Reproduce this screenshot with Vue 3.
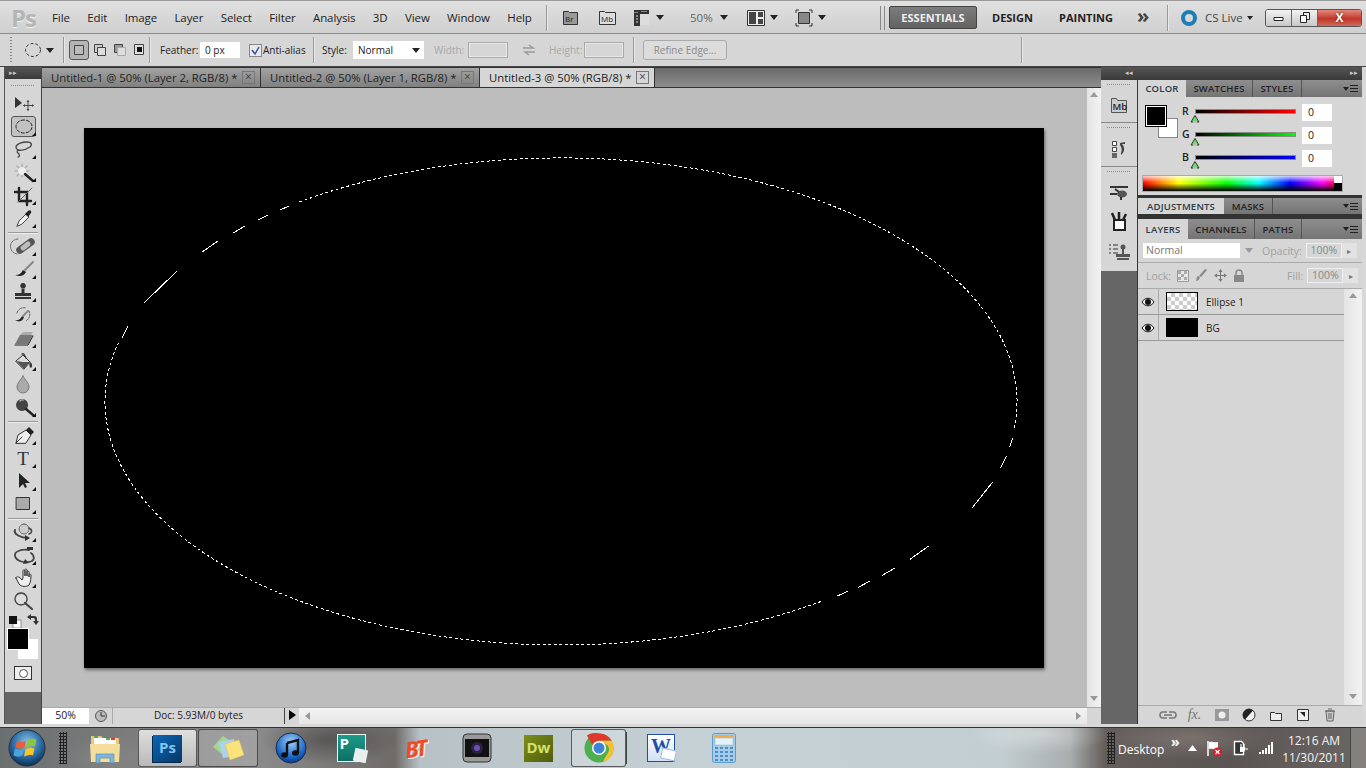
<template>
  <div class="app">
    <!-- title + menu bar -->
    <header class="menubar">
      <div class="ps-logo">Ps</div>
      <nav class="menu">
        <span v-for="m in menus" :key="m">{{ m }}</span>
      </nav>
      <i class="vsep"></i>
      <div class="app-btn">
        <svg width="17" height="17" viewBox="0 0 17 17"><path d="M1.5 2.500h5l1 1h8v12h-14z" fill="#999" stroke="#333" /><text x="3" y="12.500" class="ico-text">Br</text></svg>
      </div>
      <div class="app-btn">
        <svg width="19" height="17" viewBox="0 0 19 17"><path d="M1.500 2.500h5l1 1h10v12h-16z" fill="#ddd" stroke="#333" /><text x="3" y="12.500" class="ico-text">Mb</text></svg>
      </div>
      <div class="app-btn">
        <svg width="18" height="18" viewBox="0 0 18 18"><path d="M1 2h15v14h-15z" fill="#ddd" /><path d="M1 1h6v16h-6zM7 1h9v4h-9z" fill="#333" /><path d="M2 3v1M4 3v1M9 2v1M11 2v1M13 2v1M3 7h2M3 10h2M3 13h2" stroke="#ddd" /></svg>
      </div>
      <i class="arrow"></i>
      <div class="zoom-val">50%</div>
      <i class="arrow"></i>
      <div class="app-btn">
        <svg width="18" height="18" viewBox="0 0 18 18"><path d="M.5 1.500h17v15h-17z" fill="#eee" stroke="#333" /><path d="M2 3h7v12h-7zM11 3h5v5h-5zM11 10h5v5h-5z" fill="#444" /></svg>
      </div>
      <i class="arrow"></i>
      <div class="app-btn">
        <svg width="18" height="18" viewBox="0 0 18 18"><path d="M1 4v-3h3M14 1h3v3M17 14v3h-3M4 17h-3v-3" fill="none" stroke="#333" /><path d="M3.500 3.500h11v11h-11z" fill="#888" stroke="#333" /></svg>
      </div>
      <i class="arrow"></i>
      <i class="dblsep"></i>
      <div class="workspace active">ESSENTIALS</div>
      <div class="workspace pad">DESIGN</div>
      <div class="workspace">PAINTING</div>
      <div class="more">»</div>
      <i class="vsep"></i>
      <div class="cs-ring"></div>
      <div class="cs-live">CS Live <i class="arrow small"></i></div>
      <div class="win-btns">
        <div class="win-btn"><svg width="12" height="8"><path d="M1 3.500h9v3h-9z" fill="#fff" stroke="#222" /></svg></div>
        <div class="win-btn"><svg width="12" height="13"><path d="M4.500 1.500h6v7h-6z" fill="#eee" stroke="#222" /><path d="M1.500 4.500h6v7h-6z" fill="#fff" stroke="#222" /></svg></div>
        <div class="win-btn close">X</div>
      </div>
    </header>

    <!-- tool options bar -->
    <div class="options">
      <div class="grip-v"></div>
      <svg width="20" height="20" viewBox="0 0 20 20"><ellipse cx="10" cy="10" rx="7.500" ry="6.500" fill="none" stroke="#333" stroke-dasharray="3 2" /></svg>
      <i class="arrow"></i>
      <i class="vsep"></i>
      <div class="modes">
        <div class="mode active"><svg width="12" height="12"><path d="M1.500 1.500h9v9h-9z" fill="#bbb" stroke="#444" /></svg></div>
        <div class="mode"><svg width="14" height="14"><path d="M1.500 1.500h8v8h-8z" fill="#ccc" stroke="#444" /><path d="M4.500 4.500h8v8h-8z" fill="#ddd" stroke="#444" /></svg></div>
        <div class="mode"><svg width="14" height="14"><path d="M1.500 1.500h8v3h-5v5h-3z" fill="#999" stroke="#444" /><path d="M4.500 4.500h8v8h-8z" fill="#ddd" stroke="#aaa" /></svg></div>
        <div class="mode"><svg width="14" height="14"><path d="M1.500 1.500h9v10h-9z" fill="#ddd" stroke="#444" /><path d="M4 4h5v5h-5z" fill="#111" /></svg></div>
      </div>
      <i class="vsep"></i>
      <label class="opt-label">Feather:</label>
      <div class="field feather">0 px</div>
      <span></span>
      <div class="checkbox"><svg width="11" height="11"><path d="M2 5l3 4 4-7" fill="none" stroke="#35518f" stroke-width="1.500" /></svg></div>
      <label class="opt-label">Anti-alias</label>
      <i class="vsep"></i>
      <label class="opt-label">Style:</label>
      <div class="field style-select">Normal <i class="arrow"></i></div>
      <span></span>
      <label class="opt-label off">Width:</label>
      <div class="field off-field"></div>
      <svg class="swap" width="14" height="12"><path d="M1 4h9M7 1l4 3-4 0M13 8h-9M7 11l-4-3 4 0" fill="none" stroke="#999" stroke-width="1.500" /></svg>
      <label class="opt-label off">Height:</label>
      <div class="field off-field"></div>
      <span></span>
      <i class="vsep"></i>
      <div class="refine">Refine Edge...</div>
      <span></span>
      <i class="vsep"></i>
    </div>

    <div class="work">
      <!-- tools -->
      <aside class="tools">
        <div class="collapse-bar">▸▸</div>
        <div class="grip-h"></div>
        <template v-for="(t, i) in tools" :key="i">
          <div v-if="t.sep" class="tool-sep"></div>
          <div v-else class="tool" :class="{ selected: t.selected }">
            <svg width="36" height="23" viewBox="0 0 36 23">
              <path v-for="(s, k) in t.shapes" :key="k" :d="s.d" :fill="s.f" :stroke="s.s" :stroke-width="s.w" :stroke-dasharray="s.dash" stroke-linecap="round" />
              <text v-if="t.label" x="18" y="18" text-anchor="middle" class="tool-t">{{ t.label }}</text>
              <path v-if="t.fly" d="M31 17v4h-4z" fill="#111" />
            </svg>
          </div>
        </template>
        <div class="mini-swatch">
          <svg width="36" height="16" viewBox="0 0 36 16">
            <path d="M8 8h8v8h-8z" fill="#fff" stroke="#333" stroke-width=".5" />
            <path d="M4 4h8v8h-8z" fill="#111" />
            <path d="M22 5l4-3v2h3a3 3 0 0 1 3 3v2h2l-3 4-3-4h2v-1a2 2 0 0 0-2-2h-2v2z" fill="#333" />
          </svg>
        </div>
        <div class="swatches">
          <div class="sw-bg"></div>
          <div class="sw-fg"></div>
        </div>
        <div class="qmask"><div class="qmask-dot"></div></div>
        <div class="tools-fill"></div>
      </aside>

      <!-- document -->
      <main class="doc">
        <div class="tabs">
          <div v-for="t in docTabs" :key="t.name" class="tab" :class="{ active: t.active }" >
            <span>{{ t.name }}</span>
            <b class="tab-x">×</b>
          </div>
        </div>
        <div class="doc-row">
          <div class="pasteboard">
            <div class="canvas">
              <svg class="ants" width="960" height="540" viewBox="84 128 960 540">
                <path :d="dottedPath" fill="none" stroke="#fff" stroke-dasharray="3 2.500" shape-rendering="crispEdges" />
                <path :d="dashPath" fill="none" stroke="#fff" shape-rendering="crispEdges" />
              </svg>
            </div>
          </div>
          <div class="vscroll">
            <i class="up"></i>
            <i class="down"></i>
          </div>
        </div>
        <div class="status">
          <div class="st-zoom">50%</div>
          <div class="st-icon"><svg width="14" height="14"><circle cx="7" cy="7" r="5.500" fill="#bbb" stroke="#555" /><path d="M7 3v4h4" fill="none" stroke="#333" /></svg></div>
          <div class="st-doc">Doc: 5.93M/0 bytes</div>
          <div class="st-arrow"></div>
          <div class="hscroll"><i class="left"></i><i class="right"></i></div>
          <div class="st-corner"></div>
        </div>
      </main>

      <!-- panels -->
      <aside class="side">
        <div class="side-bar"><span>◂◂</span><span>▸▸</span></div>
        <div class="side-body">
          <div class="dock">
            <div class="dock-group g1">
              <div class="grip-h"></div>
              <svg width="20" height="20" viewBox="0 0 20 20"><path d="M2.500 3.500h5l1 2h9v12h-15z" fill="#ccc" stroke="#555" /><text x="3.500" y="15" class="ico-text big">Mb</text></svg>
            </div>
            <div class="dock-group g2">
              <div class="grip-h"></div>
              <svg width="20" height="20" viewBox="0 0 20 20"><path d="M3.500 3.500h4v4h-4zM3.500 9.500h4v4h-4z" fill="#fff" stroke="#444" /><path d="M3 15h5v5h-5z" fill="#666" /><path d="M11 5l5-1v2l-3 0c3 3 3 8-1 11l0-2c1-3 1-5-1-8z" fill="#444" /></svg>
            </div>
            <div class="dock-group g3">
              <div class="grip-h"></div>
              <svg width="20" height="20" viewBox="0 0 20 20"><path d="M1 5h18M1 12h7" stroke="#333" stroke-width="2" /><ellipse cx="13" cy="12" rx="5" ry="3.500" fill="#555" /><path d="M6 7l4 3M12 15v3" stroke="#333" stroke-width="2" /></svg>
              <svg width="20" height="22" viewBox="0 0 20 22"><path d="M5 9h11v10h-11z" fill="#fff" stroke="#222" stroke-width="2" /><path d="M6 9l-3-7M10 9v-8M14 9l3-6" stroke="#222" stroke-width="2.500" /></svg>
              <svg width="22" height="20" viewBox="0 0 22 20"><path d="M1 3h2M5 3h5M1 7h2M5 7h5M1 11h2M5 11h5" stroke="#333" /><circle cx="15" cy="5" r="2.500" fill="#555" /><path d="M14 6h2v6h-2zM8 12h14v3h-14zM9 16h12v2h-12z" fill="#555" /></svg>
            </div>
          </div>

          <div class="panels">
            <section class="tabrow color-tabs">
              <div class="ptab active w48">COLOR</div>
              <div class="ptab w67">SWATCHES</div>
              <div class="ptab w49">STYLES</div>
              <div class="pmenu"><i class="arrow small"></i><span class="bars"></span></div>
            </section>
            <section class="color-body">
              <div class="color-chips">
                <div class="chip-bg"></div>
                <div class="chip-fg"></div>
              </div>
              <div class="sliders">
                <div v-for="c in channels" :key="c.key" class="slider-row">
                  <label>{{ c.key }}</label>
                  <div class="track-wrap">
                    <div class="track" :class="c.cls"></div>
                    <svg class="thumb" width="10" height="8"><path d="M5 .5l4 6.500h-8z" fill="#6fdc6f" stroke="#333" /><path d="M3 7h4" stroke="#fff" /></svg>
                  </div>
                  <div class="num">0</div>
                </div>
              </div>
              <div class="spectrum">
                <div class="spec-end"></div>
              </div>
            </section>

            <section class="tabrow adj-tabs">
              <div class="ptab active w86">ADJUSTMENTS</div>
              <div class="ptab w49">MASKS</div>
              <div class="pmenu"><i class="arrow small"></i><span class="bars"></span></div>
            </section>

            <section class="tabrow layer-tabs">
              <div class="ptab active w50">LAYERS</div>
              <div class="ptab w67">CHANNELS</div>
              <div class="ptab w47">PATHS</div>
              <div class="pmenu"><i class="arrow small"></i><span class="bars"></span></div>
            </section>
            <section class="layers-body">
              <div class="blend-row">
                <div class="blend">Normal</div>
                <div class="blend-arrow"><i class="arrow grey"></i></div>
                <label class="dim">Opacity:</label>
                <div class="pct">100%</div>
                <div class="pct-arrow">▸</div>
              </div>
              <div class="lock-row">
                <label class="dim">Lock:</label>
                <svg width="12" height="12"><path d="M.5.5h11v11h-11z" fill="#e8e8e8" stroke="#999" /><path d="M1 1h3v3h-3zM7 1h3v3h-3zM4 4h3v3h-3zM1 7h3v3h-3zM7 7h3v3h-3z" fill="#aaa" /></svg>
                <svg width="13" height="13"><path d="M12 1l-6 7-2-1 6-7zM5 8c-1 3-2 4-4 4 1-1 0-4 2-5z" fill="#888" /></svg>
                <svg width="13" height="13"><path d="M6.500 0l2 3h-4zM6.500 13l2-3h-4zM0 6.500l3-2v4zM13 6.500l-3-2v4zM6 3h1v7h-1zM3 6h7v1h-7z" fill="#777" /></svg>
                <svg width="12" height="13"><path d="M3 6v-2a3 3 0 0 1 6 0v2" fill="none" stroke="#888" stroke-width="1.500" /><path d="M1 6h10v7h-10z" fill="#888" /></svg>
                <label class="dim fill-label">Fill:</label>
                <div class="pct">100%</div>
                <div class="pct-arrow">▸</div>
              </div>
              <div class="layer-area">
                <div class="layer-list">
                  <div v-for="l in layers" :key="l.name" class="layer">
                    <div class="eye">
                      <svg width="14" height="10" viewBox="0 0 14 10"><path d="M1 5c3-5 9-5 12 0-3 5-9 5-12 0z" fill="#eee" stroke="#111" /><circle cx="7" cy="5" r="3" fill="#111" /></svg>
                    </div>
                    <div class="thumb-box" :class="l.thumb"></div>
                    <span class="layer-name">{{ l.name }}</span>
                  </div>
                </div>
                <div class="layer-scroll"><i class="up"></i><i class="down"></i></div>
              </div>
              <div class="layer-foot">
                <svg width="18" height="10"><path d="M8 2h-4a3 3 0 0 0 0 6h4M10 2h4a3 3 0 0 1 0 6h-4M5 5h8" fill="none" stroke="#777" stroke-width="1.500" /></svg>
                <span class="fx">fx.</span>
                <svg width="14" height="12"><path d="M0 0h14v12h-14z" fill="#999" /><circle cx="7" cy="6" r="3.500" fill="#eee" /></svg>
                <svg width="14" height="14"><circle cx="7" cy="7" r="6" fill="#eee" stroke="#333" /><path d="M7 1a6 6 0 0 0-4 10.500l8-9a6 6 0 0 0-4-1.500z" fill="#222" /></svg>
                <svg width="12" height="11"><path d="M.5 2.500v8h11v-7h-6l-1-1z" fill="#eee" stroke="#333" /></svg>
                <svg width="12" height="12"><path d="M.5.5h11v11h-11z" fill="#eee" stroke="#333" /><path d="M3 3h5v5z" fill="#222" /></svg>
                <svg width="12" height="14"><path d="M2 3l1 10h6l1-10z" fill="#ccc" stroke="#666" /><path d="M1 3h10M4 1h4M5 5v6M7 5v6" stroke="#666" /></svg>
              </div>
            </section>
          </div>
        </div>
      </aside>
    </div>

    <!-- windows taskbar -->
    <footer class="taskbar">
      <div class="cell">
        <svg width="40" height="40" viewBox="0 0 40 40">
          <defs>
            <radialGradient id="orb" cx="50%" cy="35%" r="65%"><stop offset="0" stop-color="#8cc4e8" /><stop offset=".6" stop-color="#2a6da5" /><stop offset="1" stop-color="#0c2f52" /></radialGradient>
          </defs>
          <circle cx="20" cy="20" r="18" fill="url(#orb)" stroke="#27323c" />
          <path d="M10 13c3 2 6 1 9-.5l-1.500 7c-3 1.500-6 1.500-9 0z" fill="#e8603a" />
          <path d="M20.500 12c3-1 6-2 9-.5l-1.500 7c-3-1-6 0-9 1z" fill="#8cc63f" />
          <path d="M8 20.500c3 1.500 6 1.500 9 0l-1.500 7c-3 1.500-6 1.500-9 0z" fill="#4aa3df" />
          <path d="M18.500 21c3-1 6-2 9-.5l-1.500 7c-3-1-6 0-9 1z" fill="#f5c52c" />
        </svg>
      </div>
      <div class="cell"><div class="task-grip"></div></div>
      <div class="cell">
        <svg width="32" height="30" viewBox="0 0 32 30"><path d="M2 3h10l2 2h16v24h-28z" fill="#e8c878" /><path d="M5 5h22v6h-22z" fill="#fff" /><path d="M5 3h4v2h-4zM17 5h4v2h-4z" fill="#4caf50" /><path d="M22 5h4v2h-4z" fill="#d33" /><path d="M1 11h30l-1 18h-28z" fill="#f4dc9a" /><path d="M7 21h18v9h-4v-5h-10v5h-4z" fill="#7fb6dc" stroke="#4d87b0" stroke-width=".6" /></svg>
      </div>
      <div class="cell task-btn active">
        <div class="ps-app">Ps</div>
      </div>
      <span></span>
      <div class="cell task-btn dim-btn">
        <svg width="34" height="28" viewBox="0 0 34 28"><path d="M2 13l10-11 12 8-9 13z" fill="#a4d88f" /><path d="M8 8l15-3 3 17-14 2z" fill="#a9d3ee" /><path d="M14 10l14-4 5 15-14 5z" fill="#fbe27a" stroke="#e0c050" stroke-width=".5" /></svg>
      </div>
      <div class="cell">
        <svg width="32" height="32" viewBox="0 0 32 32">
          <defs><radialGradient id="tunes" cx="50%" cy="30%" r="75%"><stop offset="0" stop-color="#9fd0f5" /><stop offset=".7" stop-color="#1561c6" /><stop offset="1" stop-color="#0b2d70" /></radialGradient></defs>
          <circle cx="16" cy="16" r="15" fill="url(#tunes)" stroke="#1a2a4a" />
          <path d="M12 11l11-3v13" fill="none" stroke="#111" stroke-width="2.400" /><path d="M12 11v12" stroke="#111" stroke-width="2.400" /><ellipse cx="9.500" cy="23" rx="3.500" ry="2.800" fill="#111" /><ellipse cx="20.500" cy="21" rx="3.500" ry="2.800" fill="#111" />
        </svg>
      </div>
      <div class="cell">
        <div class="project">P<i class="project-doc"></i></div>
      </div>
      <div class="cell"><div class="bt">BT</div></div>
      <div class="cell">
        <svg width="30" height="30" viewBox="0 0 30 30"><rect x="1" y="1" width="28" height="28" rx="4" fill="#9a9a9a" stroke="#333" /><rect x="3" y="6" width="24" height="18" fill="#111" /><circle cx="15" cy="15" r="6" fill="#2b2140" /><circle cx="15" cy="15" r="3" fill="#6c4fb0" /></svg>
      </div>
      <span></span>
      <div class="cell"><div class="dw-app">Dw</div></div>
      <div class="cell task-btn chrome-btn">
        <svg width="30" height="30" viewBox="0 0 30 30">
          <circle cx="15" cy="15" r="14.500" fill="#4caf50" />
          <path d="M15 .5a14.500 14.500 0 0 1 12.600 7.300l-12.600 0a7 7 0 0 0-6.500 4.500l-5.600-9.800a14.500 14.500 0 0 1 12.100-2z" fill="#e0392b" />
          <path d="M27.600 7.800a14.500 14.500 0 0 1-9 21.300l6-10.300a7 7 0 0 0-1-6.500l-8.600-4.500z" fill="#fbc02d" />
          <circle cx="15" cy="15" r="7" fill="#fff" /><circle cx="15" cy="15" r="5.500" fill="#3f83d6" />
        </svg>
      </div>
      <div class="cell">
        <div class="word"><span>W</span><i class="word-mail"></i></div>
      </div>
      <div class="cell">
        <svg width="24" height="30" viewBox="0 0 24 30"><rect x=".5" y=".5" width="23" height="29" rx="2" fill="#a5cbe8" stroke="#5b9ccc" /><path d="M2 2h20v2h-20z" fill="#f0a94a" /><path d="M3 5h18v7h-18z" fill="#e7f1f9" stroke="#7aa" stroke-width=".4" /><path d="M3 14h3v2h-3zM8 14h3v2h-3zM13 14h3v2h-3zM18 14h3v2h-3zM3 18h3v2h-3zM8 18h3v2h-3zM13 18h3v2h-3zM18 18h3v2h-3zM3 22h3v2h-3zM8 22h3v2h-3zM13 22h3v2h-3zM18 22h3v2h-3zM3 26h3v2h-3zM8 26h3v2h-3zM13 26h3v2h-3zM18 26h3v2h-3z" fill="#4d8fc0" /></svg>
      </div>
      <span></span>
      <div class="cell"><div class="task-grip small-grip"></div></div>
      <div class="desktop">Desktop</div>
      <div class="tray-more">»</div>
      <div class="cell"><svg width="9" height="6"><path d="M4.500 0l4.500 6h-9z" fill="#fff" /></svg></div>
      <div class="cell">
        <svg width="16" height="17" viewBox="0 0 16 17"><path d="M2 1v15" stroke="#fff" stroke-width="1.500" /><path d="M3 2c3-1 5 1 9 0v7c-4 1-6-1-9 0z" fill="#fff" /><circle cx="11.500" cy="12" r="4.500" fill="#d3202a" /><path d="M9.500 10l4 4M13.500 10l-4 4" stroke="#fff" stroke-width="1.200" /></svg>
      </div>
      <div class="cell">
        <svg width="15" height="16" viewBox="0 0 15 16"><path d="M1.500 1.500h7l2 2v11h-9z" fill="#333" stroke="#fff" stroke-width="1.400" /><path d="M7 7h5v4l-2 1h-3z" fill="#fff" /><path d="M8 4v3M11 4v3M12 9h3" stroke="#fff" stroke-width="1.200" /></svg>
      </div>
      <div class="cell">
        <svg width="15" height="12"><path d="M0 10h2v2h-2zM3 8h2v4h-2zM6 6h2v6h-2zM9 3h2v9h-2zM12 0h2v12h-2z" fill="#fff" /></svg>
      </div>
      <div class="clock"><div>12:16 AM</div><div>11/30/2011</div></div>
      <div class="show-desk"></div>
    </footer>
  </div>
</template>

<script setup>
const menus = ['File', 'Edit', 'Image', 'Layer', 'Select', 'Filter', 'Analysis', '3D', 'View', 'Window', 'Help']

const docTabs = [
  { name: 'Untitled-1 @ 50% (Layer 2, RGB/8) *' },
  { name: 'Untitled-2 @ 50% (Layer 1, RGB/8) *' },
  { name: 'Untitled-3 @ 50% (RGB/8) *', active: true }
]

const channels = [
  { key: 'R', cls: 'red' },
  { key: 'G', cls: 'green' },
  { key: 'B', cls: 'blue' }
]

const layers = [
  { name: 'Ellipse 1', thumb: 'checker' },
  { name: 'BG', thumb: 'black' }
]

// shape helper for the toolbox icons
const p = (d, f = 'none', s = 'none', w = 1, dash) => ({ d, f, s, w, dash })

const tools = [
  { shapes: [p('M10 5v11l7-5z', '#333'), p('M23 9v9M19 13.500h9', 'none', '#444'), p('M23 8l-1.500 2h3zM23 19l-1.500-2h3zM18 13.500l2-1.500v3zM29 13.500l-2-1.500v3z', '#444')] },
  { selected: true, fly: true, shapes: [p('M19 5c-4.500 0-8 2.800-8 6.500s3.500 6.500 8 6.500 8-2.800 8-6.500-3.500-6.500-8-6.500z', 'none', '#222', 1, '3 2')] },
  { fly: true, shapes: [p('M11 9c0-3 6-5 11-5 4 0 6 2 3 5-3 2-8 4-12 3-2-1-2-2-2-3zM13 12c-2 2 0 3 1 4 1 2 0 3-1 3', 'none', '#444', 1.300)] },
  { fly: true, shapes: [p('M17 3v13M10 10h14M12 5l10 10M22 5l-10 10', 'none', '#aaa', 1.200), p('M17 6a4 4 0 1 0 .1 0z', '#eee'), p('M20 13l8 7', 'none', '#222', 2.400)] },
  { fly: true, shapes: [p('M14 4v13h12M10 8h12v13', 'none', '#222', 2.400), p('M13 18L27 4', 'none', '#666')] },
  { fly: true, shapes: [p('M12 19l2-5 7-7 3 3-7 7z', '#eee', '#444'), p('M20 7l3-3c2-2 4 0 3 2l-3 4z', '#222')] },
  { sep: true },
  { fly: true, shapes: [p('M13 4a7.500 7.500 0 1 0 0 15', 'none', '#555', 1, '1.500 1.500'), p('M15 15l11-8', 'none', '#555', 7.500), p('M18 13l5-4', 'none', '#bbb', 5)] },
  { fly: true, shapes: [p('M10 17c4 0 6-1 8-5l3 2c-2 4-6 5-11 3z', '#222'), p('M20 12l8-8', 'none', '#888', 2)] },
  { fly: true, shapes: [p('M18 2a2.800 2.800 0 1 0 .1 0zM16.500 7h3v5h-3zM10 12h16v3h-16zM10 16h16v2h-16z', '#333')] },
  { fly: true, shapes: [p('M10 16c3 1 6-1 7-4l2 1c-1 4-5 6-9 3z', '#222'), p('M18 12l5-5', 'none', '#888', 1.800), p('M12 9c1-4 5-6 9-5M24 7c2 4 0 8-3 10', 'none', '#555', 1, '1.500 1.500')] },
  { fly: true, shapes: [p('M10 17l5-9h13l-5 9z', '#777'), p('M15 8l3-3h10l-2 3z', '#aaa'), p('M10 18h13l5-9', 'none', '#222')] },
  { fly: true, shapes: [p('M11 11l7-6 7 7-6 7z', '#ddd', '#333'), p('M17 4c2-2 3 3 4 4', 'none', '#333', 1.200), p('M25 12c2 1 3 4 1 6-2-1-2-4-1-6z', '#333'), p('M11 11l7 1 7 0-6 7z', '#555')] },
  { shapes: [p('M18 3c2 4 6 7 6 11a6 6 0 0 1-12 0c0-4 4-7 6-11z', '#aaa', '#777')] },
  { fly: true, shapes: [p('M17 3a6 6 0 1 0 .1 0z', '#444'), p('M21 13l7 6', 'none', '#222', 2.400), p('M15 5a3 3 0 0 1 3-1', 'none', '#aaa', 1.400)] },
  { sep: true },
  { fly: true, shapes: [p('M11 19l2-8 8-5 5 5-5 8z', '#eee', '#333'), p('M21 6l3-3 5 5-3 3z', '#222'), p('M11 19l6-6', 'none', '#333')] },
  { fly: true, label: 'T', shapes: [] },
  { fly: true, shapes: [p('M14 3v15l4-4 2 4 2-1-2-4h5z', '#222')] },
  { fly: true, shapes: [p('M11.500 4.500h13v12h-13z', '#aaa', '#333')] },
  { sep: true },
  { fly: true, shapes: [p('M10 9c-2 4 6 8 13 8', 'none', '#444', 2), p('M20 14l5 3-5 3z', '#333'), p('M19 3a5 5 0 1 0 .1 0z', '#ccc', '#666'), p('M24 7c4 2 3 5 0 6', 'none', '#444', 1.500)] },
  { fly: true, shapes: [p('M24 6c-7-1-15 1-14 6 1 5 10 8 17 5 3-2 2-6-1-8', 'none', '#444', 1.800), p('M20 15l4 4-6 1z', '#333'), p('M22 3h6v3h-6z', '#333')] },
  { fly: true, shapes: [p('M11 11l3 6c2 3 8 3 10 1 2-3 2-8 2-10-1-2-2-1-2 0v2-5c-1-2-2-1-2 0v4-6c-1-2-2-1-2 0v6-5c-1-2-2-1-2 0v7l-1 2c-3-4-6-4-6-2z', '#eee', '#333')] },
  { shapes: [p('M16 3a6 6 0 1 0 .1 0z', '#ddd', '#444', 1.300), p('M20 13l7 6', 'none', '#444', 2.200)] }
]

// marching ants: dotted arcs plus the long redraw-dashes seen on the ellipse
const cx = 561
const cy = 401.5
const rx = 456
const ry = 243.5
const pt = (deg) => {
  const a = (deg * Math.PI) / 180
  return `${(cx + rx * Math.cos(a)).toFixed(1)} ${(cy + ry * Math.sin(a)).toFixed(1)}`
}
const dottedPath = `M${pt(235)} A${rx} ${ry} 0 0 1 ${pt(366.7)} M${pt(55.2)} A${rx} ${ry} 0 0 1 ${pt(194)}`

const dashes = [
  [122, 338, 128, 326], [144, 303, 177, 271], [202, 252, 218, 241], [233, 233, 245, 226],
  [258, 220, 268, 215], [280, 210, 289, 206],
  [1012.7, 438, 1009.7, 446.7], [1006.7, 456, 1000.7, 467.7], [992.7, 482, 972.3, 507.7],
  [928.7, 546, 910, 559.3], [895, 568, 882.3, 575.3], [870, 581, 858.3, 587.3], [848, 591.3, 837.3, 596]
]
const dashPath = dashes.map((d) => `M${d[0]} ${d[1]}L${d[2]} ${d[3]}`).join('')
</script>

<style>
html, body { margin: 0; background: #d4d4d4; }
</style>

<style scoped>
.app {
  width: 1366px;
  height: 768px;
  overflow: hidden;
  display: flex;
  flex-direction: column;
  background: #d4d4d4;
  font-family: "Open Sans", "Noto Sans", sans-serif;
  color: #222;
}
i { display: block; font-style: normal; }
svg { display: block; }

.arrow {
  width: 0;
  height: 0;
  border-left: 4px solid transparent;
  border-right: 4px solid transparent;
  border-top: 5px solid #222;
}
.arrow.small { border-left-width: 3px; border-right-width: 3px; border-top-width: 4px; }
.arrow.grey { border-top-color: #999; }
.vsep { width: 1px; height: 26px; background: #999; box-shadow: 1px 0 0 #e8e8e8; }
.ico-text { font-size: 8px; font-family: "Open Sans", sans-serif; fill: #222; }
.ico-text.big { font-size: 9.500px; font-weight: 600; }

/* menu bar */
.menubar {
  height: 33px;
  flex: none;
  display: grid;
  grid-template-columns: 52px 494px 16px 36px 35px 23px 34px 30px 27px 23px 25px 23px 60px 11px 88px 82px 78px 30px 14px 24px 60px 101px;
  align-items: center;
  justify-items: start;
  background: linear-gradient(#e0e0e0, #cfcfcf);
  border-top: 1px solid #9a9a9a;
  box-sizing: border-box;
}
.ps-logo {
  padding-left: 11px;
  font-size: 24px;
  font-weight: 700;
  letter-spacing: -1px;
  color: #b5b5b5;
  text-shadow: 0 1px 0 #f2f2f2;
}
.menu { display: flex; gap: 17.400px; font-size: 11.500px; letter-spacing: -.1px; }
.zoom-val { font-size: 11.500px; color: #666; }
.dblsep { width: 3px; height: 24px; margin-left: 2px; border-left: 1px solid #888; border-right: 1px solid #888; }
.workspace { font-size: 11px; font-weight: 700; color: #222; white-space: nowrap; }
.workspace.pad { padding-left: 15px; }
.workspace.active {
  width: 88px;
  height: 23px;
  box-sizing: border-box;
  line-height: 21px;
  text-align: center;
  color: #eee;
  background: linear-gradient(#7d7d7d, #626262);
  border: 1px solid #444;
  border-radius: 2px;
}
.more { font-size: 20px; line-height: 20px; color: #444; font-weight: 700; margin-top: -4px; }
.cs-ring { width: 8px; height: 8px; margin-top: 1px; border: 4px solid #1b7eb4; border-radius: 50%; }
.cs-live { display: flex; align-items: center; gap: 4px; font-size: 11.500px; color: #444; }
.win-btns {
  display: flex;
  height: 18px;
  box-sizing: border-box;
  border: 1px solid #555;
  border-radius: 3px;
  overflow: hidden;
  width: 97px;
}
.win-btn {
  width: 25px;
  display: flex;
  align-items: center;
  justify-content: center;
  background: linear-gradient(#f2f2f2, #c8c8c8);
  border-right: 1px solid #666;
}
.win-btn.close {
  flex: 1;
  border: 0;
  color: #fff;
  font-weight: 700;
  font-size: 12px;
  background: linear-gradient(#e2897c, #c0372a 55%, #cf6a5c);
  text-shadow: 0 0 2px #611;
}

/* options bar */
.options {
  height: 34px;
  flex: none;
  box-sizing: border-box;
  display: grid;
  grid-template-columns: 23px 23px 17px 6px 80px 11px 40px 40px 9px 14px 50px 9px 31px 71px 10px 34px 40px 41px 35px 40px 9px 10px 84px 294px 1px;
  align-items: center;
  justify-items: start;
  background: #d6d6d6;
  border-top: 1px solid #8a8a8a;
  border-bottom: 1px solid #444;
}
.grip-v {
  width: 2px;
  height: 26px;
  margin-left: 10px;
  background: repeating-linear-gradient(#8a8a8a 0 1px, transparent 1px 3px);
}
.modes { display: flex; gap: 2px; align-items: center; }
.mode { width: 18px; height: 18px; display: flex; align-items: center; justify-content: center; }
.mode.active { background: #b4b4b4; border: 1px solid #555; border-radius: 3px; }
.opt-label { font-size: 10px; white-space: nowrap; }
.opt-label.off { color: #a8a8a8; }
.field {
  box-sizing: border-box;
  height: 16px;
  background: #fff;
  font-size: 10px;
  line-height: 16px;
  padding-left: 5px;
  width: 40px;
}
.field.style-select {
  width: 71px;
  height: 18px;
  display: flex;
  align-items: center;
  justify-content: space-between;
  padding-right: 4px;
}
.field.off-field { background: #d6d6d6; border: 1px solid #aaa; box-shadow: inset 0 0 0 1px #e8e8e8; }
.checkbox { width: 11px; height: 11px; background: #e8e8f0; border: 1px solid #888; }
.swap { margin-left: 14px; }
.refine {
  width: 84px;
  height: 20px;
  box-sizing: border-box;
  border: 1px solid #aaa;
  border-radius: 3px;
  background: #dcdcdc;
  text-align: center;
  font-size: 10px;
  line-height: 18px;
  color: #888;
}

/* work area */
.work {
  height: 661px;
  flex: none;
  box-sizing: border-box;
  display: flex;
  padding: 0 4px 3px;
  border-bottom: 1px solid #333;
  background: #d8d8d8;
}

/* toolbox */
.tools {
  width: 38px;
  flex: none;
  display: flex;
  flex-direction: column;
  box-sizing: border-box;
  background: #d6d6d6;
  border-left: 1px solid #555;
  border-right: 1px solid #444;
}
.collapse-bar {
  height: 12px;
  flex: none;
  background: linear-gradient(#555, #3a3a3a);
  color: #ccc;
  font-size: 7px;
  line-height: 12px;
  padding-left: 4px;
}
.grip-h {
  height: 1px;
  margin: 6px auto 6px;
  width: 24px;
  flex: none;
  background: repeating-linear-gradient(90deg, #8a8a8a 0 1px, transparent 1px 2px);
}
.tool { position: relative; width: 36px; height: 23px; flex: none; }
.tool svg { position: relative; }
/* highlight box sits behind the selected tool's icon */
.tool.selected::before {
  content: "";
  position: absolute;
  left: 6px;
  top: 1px;
  width: 25px;
  height: 21px;
  box-sizing: border-box;
  background: #c2c2c2;
  border: 1px solid #555;
  border-radius: 3px;
}
.tool-sep { height: 1px; margin: 2px 3px; background: #999; flex: none; box-shadow: 0 1px 0 #eee; }
.tool-t { font-family: "Liberation Serif", serif; font-size: 19px; fill: #333; }
.mini-swatch { height: 16px; flex: none; margin-top: -1px; }
.swatches { position: relative; height: 33px; flex: none; margin-top: 1px; }
.sw-fg {
  position: absolute;
  left: 3px;
  top: 0;
  width: 20px;
  height: 20px;
  background: #000;
  box-shadow: 0 0 0 1px #fff;
}
.sw-bg { position: absolute; left: 13px; top: 10px; width: 20px; height: 20px; background: #fff; }
.qmask {
  width: 16px;
  height: 12px;
  margin: 4px auto 0;
  flex: none;
  background: #eee;
  border: 1px solid #333;
  display: flex;
  align-items: center;
  justify-content: center;
}
.qmask-dot { width: 7px; height: 7px; border: 1px solid #555; border-radius: 50%; background: #fff; }
.tools-fill { flex: 1; margin-top: 12px; background: #666; }

/* document */
.doc { width: 1059px; flex: none; display: flex; flex-direction: column; }
.tabs {
  height: 21px;
  flex: none;
  box-sizing: border-box;
  display: flex;
  background: linear-gradient(#6a6a6a, #8d8d8d);
  border-top: 1px solid #333;
  border-bottom: 1px solid #333;
}
.tab {
  box-sizing: border-box;
  width: 219px;
  display: flex;
  align-items: center;
  justify-content: space-between;
  padding: 0 5px 0 9px;
  border-right: 1px solid #333;
  font-size: 11.300px;
  color: #222;
  background: linear-gradient(#a2a2a2, #808080);
  white-space: nowrap;
}
.tab.active { width: 175px; background: #d6d6d6; }
.tab-x {
  width: 11px;
  height: 11px;
  border: 1px solid #777;
  font-size: 12px;
  line-height: 10px;
  text-align: center;
  font-weight: 400;
  color: #444;
}
.doc-row { flex: 1; display: flex; min-height: 0; }
.pasteboard {
  flex: 1;
  display: flex;
  align-items: center;
  justify-content: center;
  background: #bdbdbd;
  padding-right: 1px;
}
.canvas {
  width: 960px;
  height: 540px;
  background: #000;
  box-shadow: 1px 2px 3px rgba(0, 0, 0, .45);
}
.vscroll, .layer-scroll {
  width: 14px;
  flex: none;
  display: flex;
  flex-direction: column;
  justify-content: space-between;
  align-items: center;
  padding: 4px 0 6px;
  box-sizing: border-box;
  background: linear-gradient(90deg, #e4e4e4, #f2f2f2);
}
.layer-scroll { width: 18px; }
.up { width: 0; height: 0; border: 4px solid transparent; border-top: 0; border-bottom: 5px solid #999; }
.down { width: 0; height: 0; border: 4px solid transparent; border-bottom: 0; border-top: 5px solid #999; }
.status {
  height: 16px;
  flex: none;
  display: flex;
  background: #d6d6d6;
  border-top: 1px solid #aaa;
  font-size: 10px;
  line-height: 15px;
}
.st-zoom { width: 47px; background: #fff; text-align: center; font-size: 10.500px; }
.st-icon { width: 23px; display: flex; align-items: center; justify-content: center; border-right: 1px solid #aaa; }
.st-doc { width: 172px; text-align: center; box-sizing: border-box; border-right: 1px solid #444; }
.st-arrow { width: 14px; position: relative; }
.st-arrow::after {
  content: "";
  position: absolute;
  left: 4px;
  top: 2px;
  border: 5px solid transparent;
  border-right: 0;
  border-left: 7px solid #000;
}
.hscroll {
  flex: 1;
  display: flex;
  justify-content: space-between;
  align-items: center;
  padding: 0 6px;
  background: linear-gradient(#f4f4f4, #e6e6e6);
}
.left { width: 0; height: 0; border: 4px solid transparent; border-left: 0; border-right: 5px solid #999; }
.right { width: 0; height: 0; border: 4px solid transparent; border-right: 0; border-left: 5px solid #999; }
.st-corner { width: 14px; background: #d6d6d6; }

/* right side */
.side { width: 261px; flex: none; display: flex; flex-direction: column; background: #333; }
.side-bar {
  height: 13px;
  flex: none;
  display: flex;
  justify-content: space-between;
  padding: 0 4px 0 24px;
  background: linear-gradient(#555, #3a3a3a);
  color: #ccc;
  font-size: 7px;
  line-height: 12px;
}
.side-body { flex: 1; display: flex; min-height: 0; }
.dock { width: 37px; flex: none; background: #666; border-right: 1px solid #333; box-sizing: border-box; }
.dock-group {
  background: #d6d6d6;
  display: flex;
  flex-direction: column;
  align-items: center;
  border-bottom: 1px solid #888;
  box-sizing: border-box;
}
.dock-group .grip-h { margin: 4px auto 10px; }
.g1 { height: 43px; }
.g2 { height: 44px; }
.g3 { height: 104px; gap: 9px; border-bottom: 0; }
.g3 .grip-h { margin-bottom: 1px; }
.panels { width: 224px; flex: none; display: flex; flex-direction: column; }
.tabrow {
  display: flex;
  flex: none;
  background: linear-gradient(#8e8e8e, #747474);
  font-size: 9.500px;
  font-weight: 600;
}
.color-tabs { height: 17px; }
.adj-tabs { height: 16px; margin-top: 3px; }
.layer-tabs { height: 20px; margin-top: 5px; }
.ptab {
  box-sizing: border-box;
  display: flex;
  align-items: center;
  justify-content: center;
  border-right: 1px solid #555;
  color: #222;
  letter-spacing: .2px;
}
.ptab.active { background: #d6d6d6; color: #2c3a46; border-right: 0; }
.w47 { width: 47px; }
.w48 { width: 48px; }
.w49 { width: 49px; }
.w50 { width: 50px; }
.w67 { width: 67px; }
.w86 { width: 86px; }
.pmenu { flex: 1; display: flex; align-items: center; justify-content: flex-end; gap: 1px; padding-right: 4px; }
.bars {
  width: 8px;
  height: 7px;
  background: repeating-linear-gradient(#222 0 1px, transparent 1px 3px);
}
.color-body { height: 98px; flex: none; margin-bottom: 0; box-sizing: border-box; background: #d6d6d6; position: relative; padding: 7px 0 0 5px; }
.color-chips { position: absolute; left: 8px; top: 9px; width: 32px; height: 32px; }
.chip-fg { position: absolute; left: 0; top: 0; width: 18px; height: 18px; background: #000; border: 1px solid #fff; outline: 1px solid #000; }
.chip-bg { position: absolute; left: 12px; top: 12px; width: 18px; height: 18px; background: #fff; border: 1px solid #888; }
.sliders { margin-left: 39px; display: flex; flex-direction: column; gap: 6px; }
.slider-row { display: flex; align-items: flex-start; height: 17px; }
.slider-row label { width: 13px; font-size: 10.500px; font-weight: 600; line-height: 14px; }
.track-wrap { position: relative; width: 101px; margin-top: 5px; }
.track { height: 5px; border: 1px solid #8a8a8a; box-sizing: border-box; }
.track.red { background: linear-gradient(90deg, #000, #f00); }
.track.green { background: linear-gradient(90deg, #000, #0f0); }
.track.blue { background: linear-gradient(90deg, #000, #00f); }
.thumb { position: absolute; left: -5px; top: 6px; }
.num {
  margin-left: 6px;
  width: 30px;
  height: 17px;
  box-sizing: border-box;
  padding-left: 6px;
  background: #fff;
  font-size: 10.500px;
  line-height: 17px;
}
.spectrum {
  position: relative;
  width: 199px;
  height: 15px;
  margin-top: 9px;
  background:
    linear-gradient(rgba(255, 255, 255, .8), rgba(255, 255, 255, 0) 45%, rgba(0, 0, 0, 0) 50%, #000),
    linear-gradient(90deg, #f00, #ff0 18%, #0f0 42%, #0ff 58%, #00f 74%, #f0f 90%, #f00);
  box-shadow: 0 0 0 1px #aaa;
}
.spec-end { position: absolute; right: 0; top: 0; width: 8px; height: 15px; background: linear-gradient(#fff 50%, #000 50%); }
.layers-body { flex: 1; min-height: 0; display: flex; flex-direction: column; background: #d6d6d6; }
.dim { color: #a0a0a0; font-size: 10.500px; }
.blend-row, .lock-row {
  flex: none;
  display: flex;
  align-items: center;
  box-sizing: border-box;
  border-bottom: 1px solid #aaa;
  padding-left: 5px;
}
.blend-row { height: 24px; }
.lock-row { height: 26px; gap: 6px; padding-left: 8px; }
.blend {
  width: 97px;
  height: 15px;
  box-sizing: border-box;
  padding-left: 3px;
  background: #fff;
  font-size: 10.500px;
  line-height: 15px;
  color: #777;
}
.blend-arrow { width: 18px; display: flex; justify-content: center; }
.blend-row .dim { margin: 0 4px; }
.pct {
  width: 36px;
  height: 15px;
  box-sizing: border-box;
  background: #d6d6d6;
  border: 1px solid #eee;
  font-size: 10.500px;
  line-height: 13px;
  text-align: center;
  color: #888;
}
.pct-arrow { width: 15px; height: 15px; font-size: 8px; line-height: 15px; text-align: center; color: #777; background: #e2e2e2; }
.fill-label { margin-left: 36px; margin-right: -2px; }
.lock-row .pct { margin-right: -6px; }
.layer-area { flex: 1; display: flex; min-height: 0; }
.layer-list { flex: 1; }
.layer {
  height: 26px;
  box-sizing: border-box;
  display: flex;
  align-items: center;
  border-bottom: 1px solid #999;
  font-size: 10px;
}
.eye {
  width: 21px;
  height: 25px;
  flex: none;
  box-sizing: border-box;
  display: flex;
  align-items: center;
  justify-content: center;
  border-right: 1px solid #aaa;
  margin-right: 7px;
}
.thumb-box { width: 32px; height: 19px; flex: none; box-sizing: border-box; border: 1px solid #000; margin-right: 8px; }
.thumb-box.black { background: #000; }
.thumb-box.checker { background: repeating-conic-gradient(#ccc 0 25%, #fff 0 50%) 0 0 / 8px 8px; }
.layer-foot {
  height: 19px;
  flex: none;
  box-sizing: border-box;
  display: grid;
  grid-template-columns: repeat(7, 27px);
  justify-items: center;
  align-items: center;
  padding-left: 16px;
  border-top: 1px solid #aaa;
}
.fx { font-family: "Liberation Serif", serif; font-style: italic; font-size: 14px; color: #777; }

/* taskbar */
.taskbar {
  flex: 1;
  display: grid;
  grid-template-columns: 54px 18px 66px 59px 1px 60px 66px 54px 74px 50px 4px 65px 59px 62px 64px 1fr 14px 47px 20px 15px 28px 24px 28px 70px 16px;
  align-items: center;
  background:
    radial-gradient(ellipse 70px 24px at 330px 12px, rgba(40, 40, 40, .45), transparent),
    radial-gradient(ellipse 60px 22px at 110px 30px, rgba(150, 150, 150, .35), transparent),
    radial-gradient(ellipse 90px 22px at 1190px 10px, rgba(150, 140, 135, .5), transparent),
    radial-gradient(ellipse 70px 20px at 1040px 6px, rgba(255, 255, 255, .35), transparent),
    linear-gradient(90deg, #6b6f70, #7c7c7c 130px, #8a8a8a 260px, #6f6b69 395px, #b8c2c6 420px, #c6d1d5 700px, #c3ced2 1000px, #a8adae 1070px, #645e5a 1105px, #5a5452 1230px, #6b6663 1366px);
  color: #fff;
}
.cell { height: 100%; display: flex; align-items: center; justify-content: center; }
.task-btn { height: 38px; box-sizing: border-box; border: 1px solid rgba(40, 40, 40, .7); border-radius: 3px; }
.task-btn.active { background: linear-gradient(rgba(255, 255, 255, .75), rgba(255, 255, 255, .45)); }
.dim-btn { background: rgba(255, 255, 255, .2); }
.chrome-btn { background: rgba(255, 255, 255, .2); width: 55px; box-shadow: 4px 0 0 -3px #444; }
.task-grip {
  width: 8px;
  height: 32px;
  background: radial-gradient(circle, #222 1px, transparent 1.300px) 0 0 / 3px 3px;
}
.ps-app {
  width: 29px;
  height: 27px;
  background: linear-gradient(135deg, #0d67b5, #063866);
  color: #7fc4f2;
  font-weight: 700;
  font-size: 15px;
  line-height: 25px;
  text-align: center;
  box-shadow: -1px 1px 0 #03284c;
}
.project {
  position: relative;
  width: 29px;
  height: 28px;
  box-sizing: border-box;
  background: linear-gradient(#1d9b8a, #0d6f63);
  border: 1px solid #e8f5f3;
  color: #fff;
  font-weight: 700;
  font-size: 15px;
  line-height: 16px;
  padding-left: 2px;
}
.project-doc { position: absolute; right: -2px; bottom: -1px; width: 13px; height: 13px; background: #e8f0ef; transform: rotate(12deg); }
.bt { font-size: 22px; font-weight: 700; font-style: italic; color: #f04a2a; letter-spacing: -3px; text-shadow: 1px 1px 0 #fff; transform: rotate(-8deg); }
.dw-app {
  width: 29px;
  height: 27px;
  background: linear-gradient(135deg, #7c8f1a, #4e5c0c);
  color: #d5e06a;
  font-weight: 700;
  font-size: 15px;
  line-height: 25px;
  text-align: center;
}
.word {
  position: relative;
  width: 28px;
  height: 28px;
  box-sizing: border-box;
  background: linear-gradient(#fff, #cfe0f3);
  border: 1px solid #1f4f9e;
  color: #1c4fa8;
  font-family: "Liberation Serif", serif;
  font-weight: 700;
  font-size: 20px;
  line-height: 22px;
  text-align: center;
}
.word-mail { position: absolute; right: -2px; bottom: 1px; width: 13px; height: 9px; background: #fff; border: 1px solid #9db8d8; transform: rotate(12deg); }
.desktop { font-size: 12px; margin-top: 2px; }
.tray-more { font-size: 14px; line-height: 14px; font-weight: 700; margin: -12px 0 0 6px; }
.clock { font-size: 12px; line-height: 17px; text-align: center; color: #f4f4f4; margin: 2px 0 0 -2px; white-space: nowrap; }
.show-desk { height: 100%; background: rgba(255, 255, 255, .18); border-left: 1px solid #444; }
</style>
